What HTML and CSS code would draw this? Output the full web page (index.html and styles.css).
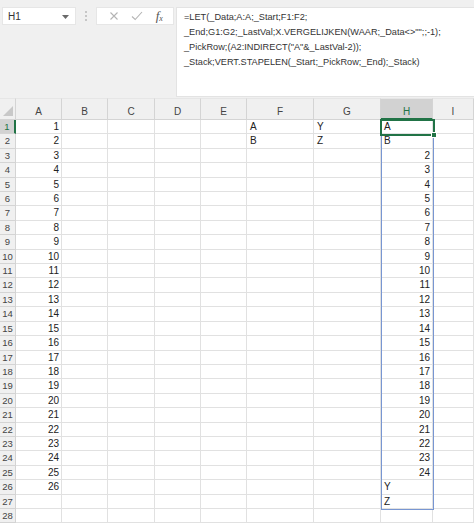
FILE: index.html
```html
<!DOCTYPE html>
<html>
<head>
<meta charset="utf-8">
<link rel="stylesheet" href="styles.css">
</head>
<body>
<div class="app">
  <div class="toolbar">
    <div class="namebox">
      <span class="ref">H1</span>
      <svg class="caret" width="7" height="4" viewBox="0 0 7 4"><path d="M0 0H7L3.5 4Z" fill="#6a6a6a"/></svg>
    </div>
    <div class="grip"><span></span><span></span><span></span></div>
    <div class="fxbtns">
      <svg class="ico" width="10" height="10" viewBox="0 0 10 10"><path d="M1.5 1.5L8.5 8.5M8.5 1.5L1.5 8.5" stroke="#b4b4b4" stroke-width="1.1" fill="none"/></svg>
      <svg class="ico" width="12" height="10" viewBox="0 0 12 10"><path d="M1 5.5L4.2 8.5L11 1" stroke="#b4b4b4" stroke-width="1.1" fill="none"/></svg>
      <span class="fx">f<sub>x</sub></span>
    </div>
    <div class="formula">
      <div>=LET(_Data;A:A;_Start;F1:F2;</div>
      <div>_End;G1:G2;_LastVal;X.VERGELIJKEN(WAAR;_Data&lt;&gt;"";;-1);</div>
      <div>_PickRow;(A2:INDIRECT("A"&amp;_LastVal-2));</div>
      <div>_Stack;VERT.STAPELEN(_Start;_PickRow;_End);_Stack)</div>
    </div>
  </div>
  <div class="sheet">
    <div class="row head">
      <span class="corner"><svg width="10" height="10" viewBox="0 0 10 10"><path d="M10 0V10H0Z" fill="#c8c8c8"/></svg></span>
      <span>A</span><span>B</span><span>C</span><span>D</span><span>E</span><span>F</span><span>G</span><span class="hsel">H</span><span>I</span>
    </div>
    <div class="row"><span class="rh rsel">1</span><span class="n">1</span><span></span><span></span><span></span><span></span><span>A</span><span>Y</span><span>A</span><span></span></div>
    <div class="row"><span class="rh">2</span><span class="n">2</span><span></span><span></span><span></span><span></span><span>B</span><span>Z</span><span>B</span><span></span></div>
    <div class="row"><span class="rh">3</span><span class="n">3</span><span></span><span></span><span></span><span></span><span></span><span></span><span class="n">2</span><span></span></div>
    <div class="row"><span class="rh">4</span><span class="n">4</span><span></span><span></span><span></span><span></span><span></span><span></span><span class="n">3</span><span></span></div>
    <div class="row"><span class="rh">5</span><span class="n">5</span><span></span><span></span><span></span><span></span><span></span><span></span><span class="n">4</span><span></span></div>
    <div class="row"><span class="rh">6</span><span class="n">6</span><span></span><span></span><span></span><span></span><span></span><span></span><span class="n">5</span><span></span></div>
    <div class="row"><span class="rh">7</span><span class="n">7</span><span></span><span></span><span></span><span></span><span></span><span></span><span class="n">6</span><span></span></div>
    <div class="row"><span class="rh">8</span><span class="n">8</span><span></span><span></span><span></span><span></span><span></span><span></span><span class="n">7</span><span></span></div>
    <div class="row"><span class="rh">9</span><span class="n">9</span><span></span><span></span><span></span><span></span><span></span><span></span><span class="n">8</span><span></span></div>
    <div class="row"><span class="rh">10</span><span class="n">10</span><span></span><span></span><span></span><span></span><span></span><span></span><span class="n">9</span><span></span></div>
    <div class="row"><span class="rh">11</span><span class="n">11</span><span></span><span></span><span></span><span></span><span></span><span></span><span class="n">10</span><span></span></div>
    <div class="row"><span class="rh">12</span><span class="n">12</span><span></span><span></span><span></span><span></span><span></span><span></span><span class="n">11</span><span></span></div>
    <div class="row"><span class="rh">13</span><span class="n">13</span><span></span><span></span><span></span><span></span><span></span><span></span><span class="n">12</span><span></span></div>
    <div class="row"><span class="rh">14</span><span class="n">14</span><span></span><span></span><span></span><span></span><span></span><span></span><span class="n">13</span><span></span></div>
    <div class="row"><span class="rh">15</span><span class="n">15</span><span></span><span></span><span></span><span></span><span></span><span></span><span class="n">14</span><span></span></div>
    <div class="row"><span class="rh">16</span><span class="n">16</span><span></span><span></span><span></span><span></span><span></span><span></span><span class="n">15</span><span></span></div>
    <div class="row"><span class="rh">17</span><span class="n">17</span><span></span><span></span><span></span><span></span><span></span><span></span><span class="n">16</span><span></span></div>
    <div class="row"><span class="rh">18</span><span class="n">18</span><span></span><span></span><span></span><span></span><span></span><span></span><span class="n">17</span><span></span></div>
    <div class="row"><span class="rh">19</span><span class="n">19</span><span></span><span></span><span></span><span></span><span></span><span></span><span class="n">18</span><span></span></div>
    <div class="row"><span class="rh">20</span><span class="n">20</span><span></span><span></span><span></span><span></span><span></span><span></span><span class="n">19</span><span></span></div>
    <div class="row"><span class="rh">21</span><span class="n">21</span><span></span><span></span><span></span><span></span><span></span><span></span><span class="n">20</span><span></span></div>
    <div class="row"><span class="rh">22</span><span class="n">22</span><span></span><span></span><span></span><span></span><span></span><span></span><span class="n">21</span><span></span></div>
    <div class="row"><span class="rh">23</span><span class="n">23</span><span></span><span></span><span></span><span></span><span></span><span></span><span class="n">22</span><span></span></div>
    <div class="row"><span class="rh">24</span><span class="n">24</span><span></span><span></span><span></span><span></span><span></span><span></span><span class="n">23</span><span></span></div>
    <div class="row"><span class="rh">25</span><span class="n">25</span><span></span><span></span><span></span><span></span><span></span><span></span><span class="n">24</span><span></span></div>
    <div class="row"><span class="rh">26</span><span class="n">26</span><span></span><span></span><span></span><span></span><span></span><span></span><span>Y</span><span></span></div>
    <div class="row"><span class="rh">27</span><span></span><span></span><span></span><span></span><span></span><span></span><span></span><span>Z</span><span></span></div>
    <div class="row"><span class="rh">28</span><span></span><span></span><span></span><span></span><span></span><span></span><span></span><span></span><span></span></div>
    <div class="spill"></div>
    <div class="active"><span class="handle"></span></div>
  </div>
</div>
</body>
</html>
```
FILE: styles.css
```css
* { box-sizing: border-box; }
html, body { margin: 0; padding: 0; }
body {
  width: 474px;
  height: 523px;
  overflow: hidden;
  background: #f0f0f0;
  font-family: "Liberation Sans", Arial, sans-serif;
  color: #222;
}
.app { width: 474px; height: 523px; overflow: hidden; }

.toolbar {
  height: 98px;
  display: flex;
  align-items: flex-start;
  padding-top: 7px;
  background: #f0f0f0;
}
.namebox {
  margin-left: 2px;
  width: 74px;
  height: 18px;
  background: #fff;
  border: 1px solid #e6e6e6;
  display: flex;
  align-items: center;
  justify-content: space-between;
  padding: 0 6px 0 5px;
}
.ref { font-size: 10px; color: #333; }
.caret { margin-top: 1px; }
.grip {
  width: 20px;
  height: 18px;
  display: flex;
  flex-direction: column;
  align-items: center;
  justify-content: center;
  gap: 2px;
}
.grip span { width: 2px; height: 2px; background: #b8b8b8; border-radius: 1px; }
.fxbtns {
  width: 78px;
  height: 18px;
  background: #fff;
  border: 1px solid #e6e6e6;
  display: flex;
  align-items: center;
  justify-content: space-around;
  padding: 0 4px 0 6px;
}
.fx {
  font-family: "Liberation Serif", serif;
  font-style: italic;
  font-size: 13px;
  color: #555;
  line-height: 1;
}
.fx sub { font-size: 8px; vertical-align: -1px; }
.formula {
  margin-left: 2px;
  flex: 1;
  height: 90px;
  background: #fff;
  border: 1px solid #e3e3e3;
  border-right: none;
  padding: 2px 0 0 7px;
  font-size: 9.2px;
  line-height: 15px;
  color: #333;
  white-space: nowrap;
}

.sheet { position: relative; background: #fff; }
.row {
  display: grid;
  grid-template-columns: 16px 46px 46px 47px 46px 46px 67px 67px 52px 1fr;
  height: 14.42px;
}
.row span {
  border-right: 1px solid #e1e1e1;
  border-bottom: 1px solid #e1e1e1;
  font-size: 10px;
  line-height: 14px;
  padding: 0 3px 0 3px;
  overflow: hidden;
  white-space: nowrap;
}
.row .n { text-align: right; padding-right: 2px; }
.row .rh {
  background: #f0f0f0;
  border-right: 1px solid #d4d4d4;
  border-bottom: 1px solid #d4d4d4;
  color: #444;
  text-align: center;
  padding: 0;
  font-size: 9.5px;
}
.row .rsel {
  background: #d2d2d2;
  border-right: 2px solid #217346;
  color: #217346;
}
.row.head { height: 22px; }
.row.head span {
  background: #f0f0f0;
  border-right: 1px solid #d4d4d4;
  border-bottom: 1px solid #d4d4d4;
  border-top: 1px solid #e6e6e6;
  text-align: center;
  font-size: 10px;
  line-height: 14px;
  padding-top: 6px;
  color: #444;
}
.row.head .corner {
  display: flex;
  align-items: flex-end;
  justify-content: center;
  padding: 0 0 3px 0;
}
.row.head .hsel {
  background: #d2d2d2;
  border-bottom: 2px solid #217346;
  color: #217346;
}

.spill {
  position: absolute;
  left: 381px;
  top: 22px;
  width: 53px;
  height: 390px;
  border: 1px solid #7896d2;
  pointer-events: none;
}
.active {
  position: absolute;
  left: 380px;
  top: 21px;
  width: 55px;
  height: 16.5px;
  border: 2px solid #217346;
}
.handle {
  position: absolute;
  right: -4px;
  bottom: -4px;
  width: 6px;
  height: 6px;
  background: #217346;
  border: 1px solid #fff;
}
```
